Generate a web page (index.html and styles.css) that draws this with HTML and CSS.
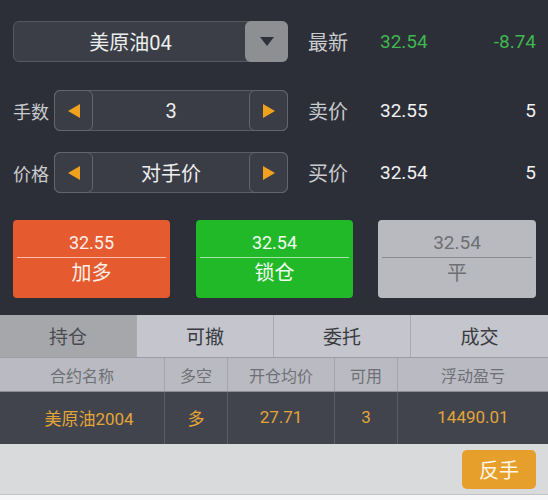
FILE: index.html
```html
<!DOCTYPE html>
<html>
<head>
<meta charset="utf-8">
<link rel="stylesheet" href="styles.css">
</head>
<body>
<div class="page">
  <div class="top">
    <div class="row r1">
      <div class="left">
        <div class="select">
          <span class="select-text">美原油04</span>
          <span class="select-btn"><svg width="14" height="9" viewBox="0 0 14 9"><polygon points="0,0 14,0 7,9" fill="#2e3139"/></svg></span>
        </div>
      </div>
      <div class="right">
        <span class="lbl">最新</span><span class="val green">32.54</span><span class="num green">-8.74</span>
      </div>
    </div>
    <div class="row r2">
      <div class="left">
        <span class="fld">手数</span>
        <div class="stepper">
          <span class="sbtn"><svg width="12" height="14" viewBox="0 0 12 14"><polygon points="12,0 12,14 0,7" fill="#f0a21e"/></svg></span>
          <span class="sval">3</span>
          <span class="sbtn"><svg width="12" height="14" viewBox="0 0 12 14"><polygon points="0,0 0,14 12,7" fill="#f0a21e"/></svg></span>
        </div>
      </div>
      <div class="right">
        <span class="lbl">卖价</span><span class="val">32.55</span><span class="num">5</span>
      </div>
    </div>
    <div class="row r3">
      <div class="left">
        <span class="fld">价格</span>
        <div class="stepper">
          <span class="sbtn"><svg width="12" height="14" viewBox="0 0 12 14"><polygon points="12,0 12,14 0,7" fill="#f0a21e"/></svg></span>
          <span class="sval">对手价</span>
          <span class="sbtn"><svg width="12" height="14" viewBox="0 0 12 14"><polygon points="0,0 0,14 12,7" fill="#f0a21e"/></svg></span>
        </div>
      </div>
      <div class="right">
        <span class="lbl">买价</span><span class="val">32.54</span><span class="num">5</span>
      </div>
    </div>
    <div class="actions">
      <div class="act orange"><span class="ap">32.55</span><span class="al">加多</span></div>
      <div class="act green-bg"><span class="ap">32.54</span><span class="al">锁仓</span></div>
      <div class="act grey"><span class="ap">32.54</span><span class="al">平</span></div>
    </div>
  </div>
  <div class="tabs">
    <div class="tab active">持仓</div>
    <div class="tab">可撤</div>
    <div class="tab">委托</div>
    <div class="tab">成交</div>
  </div>
  <div class="grid head">
    <div>合约名称</div><div>多空</div><div>开仓均价</div><div>可用</div><div>浮动盈亏</div>
  </div>
  <div class="grid data">
    <div class="c1">美原油2004</div><div>多</div><div>27.71</div><div>3</div><div>14490.01</div>
  </div>
  <div class="footer">
    <div class="rev">反手</div>
  </div>
  <div class="bottom"></div>
</div>
</body>
</html>
```
FILE: styles.css
```css
* { box-sizing: border-box; }
html, body { margin: 0; padding: 0; }
body {
  background: #2c2f38;
  font-family: Roboto, "Noto Sans CJK SC", sans-serif;
  width: 548px;
  height: 500px;
  overflow: hidden;
}
.page { width: 548px; height: 500px; display: flex; flex-direction: column; }
.top { padding: 21px 12px 0 13px; }
.row { display: flex; height: 41px; align-items: center; }
.r2 { margin-top: 28px; }
.r3 { margin-top: 21px; }
.left { width: 275px; height: 41px; display: flex; align-items: center; }
.right {
  flex: 1;
  display: flex;
  align-items: center;
  padding-left: 20px;
  color: #f2f2f2;
  font-size: 19px;
}
.lbl { width: 72px; color: #c9cacd; font-size: 20px; }
.val { width: 70px; }
.num { flex: 1; text-align: right; }
.green { color: #3fb650; }
.select {
  width: 275px;
  height: 41px;
  background: #3b3e47;
  border: 1px solid #565960;
  border-radius: 6px;
  display: flex;
  align-items: center;
}
.select-text {
  flex: 1;
  text-align: center;
  color: #eeeeee;
  font-size: 20px;
  padding-left: 2px;
}
.select-btn {
  width: 43px;
  height: 41px;
  margin: -1px -1px -1px 0;
  background: #8e8f93;
  border-radius: 6px;
  display: flex;
  align-items: center;
  justify-content: center;
}
.fld { width: 41px; color: #c9cacd; font-size: 18px; }
.stepper {
  width: 234px;
  height: 41px;
  background: #3a3d46;
  border: 1px solid #5b5e65;
  border-radius: 6px;
  display: flex;
  align-items: stretch;
}
.sbtn {
  width: 39px;
  margin: -1px;
  border: 1px solid #62656c;
  border-radius: 6px;
  display: flex;
  align-items: center;
  justify-content: center;
}
.sval {
  flex: 1;
  display: flex;
  align-items: center;
  justify-content: center;
  color: #eeeeee;
  font-size: 20px;
}
.actions {
  display: flex;
  margin-top: 27px;
  gap: 26px;
}
.act {
  width: 157px;
  height: 78px;
  border-radius: 4px;
  display: flex;
  flex-direction: column;
  align-items: stretch;
  padding: 0 4px;
}
.act:nth-child(3) { width: 158px; margin-left: -1px; }
.ap {
  height: 38px;
  padding-top: 12px;
  text-align: center;
  font-size: 18px;
  line-height: 22px;
  border-bottom: 1.5px solid rgba(255,255,255,0.6);
}
.al {
  text-align: center;
  font-size: 20px;
  line-height: 24px;
  padding-top: 3px;
}
.orange { background: #e55b2f; color: #fbeee8; }
.green-bg { background: #22b928; color: #f0fbf0; }
.grey { background: #b9babf; color: #6e6f73; }
.grey .ap { border-bottom-color: #8a8b90; font-size: 19px; }
.tabs {
  margin-top: 17px;
  display: flex;
  height: 43px;
  background: #c4c5cd;
  border-bottom: 1px solid #9c9da3;
}
.tab {
  width: 137px;
  display: flex;
  align-items: center;
  justify-content: center;
  font-size: 19px;
  color: #3a3b40;
  border-right: 1px solid #a9aab0;
  padding-bottom: 2px;
}
.tab:last-child { border-right: none; flex: 1; }
.tab.active { background: #a6a7ab; color: #4a4b50; }
.grid {
  display: grid;
  grid-template-columns: 165px 63px 107px 63px 150px;
}
.grid > div {
  display: flex;
  align-items: center;
  justify-content: center;
  border-right: 1px solid #9a9ba1;
}
.grid > div:last-child { border-right: none; }
.head {
  height: 34px;
  background: #b9bac2;
  color: #6f7075;
  font-size: 16px;
  border-bottom: 1px solid #8c8d93;
}
.head > div { border-right-color: #a4a5ab; }
.data {
  height: 52px;
  background: #41444c;
  color: #e3a43a;
  font-size: 17px;
}
.data > div { border-right-color: #5a5d64; padding-bottom: 2px; }
.data .c1 { padding-left: 14px; }
.footer {
  height: 51px;
  background: #d9dadc;
  display: flex;
  justify-content: flex-end;
  align-items: flex-start;
  padding: 6px 12px 0 0;
  border-bottom: 1px solid #c2c3c6;
}
.rev {
  width: 74px;
  height: 39px;
  background: #e69f2a;
  border-radius: 5px;
  color: #fff6e6;
  font-size: 20px;
  display: flex;
  align-items: center;
  justify-content: center;
}
.bottom { flex: 1; background: #f7f7f9; }
```
